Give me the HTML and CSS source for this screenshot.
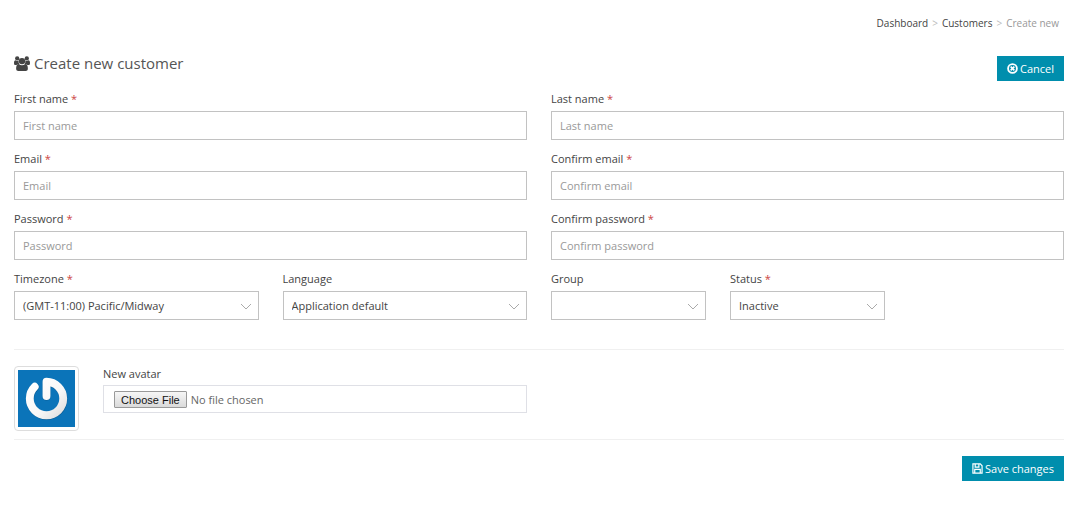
FILE: index.html
```html
<!DOCTYPE html>
<html lang="en">
<head>
<meta charset="utf-8">
<title>Create new customer</title>
<link rel="stylesheet" href="styles.css">
</head>
<body>
<nav class="breadcrumb" aria-label="Breadcrumb">
  <a href="#">Dashboard</a><span class="sep">&gt;</span><a href="#">Customers</a><span class="sep">&gt;</span><span class="current">Create new</span>
</nav>
<form class="page">
  <header class="head">
    <h1 class="title">
      <svg class="title-icon" viewBox="0 0 30 28" aria-hidden="true"><circle cx="6" cy="4.500" r="4"/><circle cx="24" cy="4.500" r="4"/><path d="M0 13c0-3 1-5 3-5 2 1.500 4 1.500 6 .5-1 3 0 5 1 6.500-2 0-4 .5-5 2H3c-2 0-3-1-3-4zM30 13c0-3-1-5-3-5-2 1.500-4 1.500-6 .5 1 3 0 5-1 6.500 2 0 4 .5 5 2h2c2 0 3-1 3-4z"/><circle cx="15" cy="9.500" r="6"/><path d="M4 24c0-5 1-9 5-9 4 3 8 3 12 0 4 0 5 4 5 9 0 3-2 4-4 4H8c-2 0-4-1-4-4z"/></svg>
      Create new customer
    </h1>
    <button type="button" class="btn">
      <svg class="btn-icon" viewBox="0 0 12 12" aria-hidden="true"><circle cx="6" cy="6" r="4.800" fill="none" stroke="currentColor" stroke-width="2"/><path d="M4 4l4 4M8 4l-4 4" fill="none" stroke="currentColor" stroke-width="1.800"/></svg>Cancel
    </button>
  </header>

  <div class="grid">
    <div class="field half"><label for="first">First name <span class="req">*</span></label><input class="control" id="first" type="text" placeholder="First name"></div>
    <div class="field half"><label for="last">Last name <span class="req">*</span></label><input class="control" id="last" type="text" placeholder="Last name"></div>
    <div class="field half"><label for="email">Email <span class="req">*</span></label><input class="control" id="email" type="email" placeholder="Email"></div>
    <div class="field half"><label for="email2">Confirm email <span class="req">*</span></label><input class="control" id="email2" type="email" placeholder="Confirm email"></div>
    <div class="field half"><label for="pass">Password <span class="req">*</span></label><input class="control" id="pass" type="password" placeholder="Password"></div>
    <div class="field half"><label for="pass2">Confirm password <span class="req">*</span></label><input class="control" id="pass2" type="password" placeholder="Confirm password"></div>
    <div class="field quarter"><label for="tz">Timezone <span class="req">*</span></label>
      <div class="select"><select class="control" id="tz"><option>(GMT-11:00) Pacific/Midway</option></select><svg class="chevron" viewBox="0 0 12 8" aria-hidden="true"><path d="M1 1l5 5 5-5"/></svg></div></div>
    <div class="field quarter"><label for="lang">Language</label>
      <div class="select"><select class="control" id="lang"><option>Application default</option></select><svg class="chevron" viewBox="0 0 12 8" aria-hidden="true"><path d="M1 1l5 5 5-5"/></svg></div></div>
    <div class="field sixth"><label for="group">Group</label>
      <div class="select"><select class="control" id="group"><option></option></select><svg class="chevron" viewBox="0 0 12 8" aria-hidden="true"><path d="M1 1l5 5 5-5"/></svg></div></div>
    <div class="field sixth"><label for="status">Status <span class="req">*</span></label>
      <div class="select"><select class="control" id="status"><option>Inactive</option></select><svg class="chevron" viewBox="0 0 12 8" aria-hidden="true"><path d="M1 1l5 5 5-5"/></svg></div></div>
  </div>

  <section class="avatar-row">
    <div class="avatar">
      <svg viewBox="0 0 58 58" role="img" aria-label="Current avatar">
        <defs>
          <linearGradient id="face" x1="0" y1="0" x2="1" y2="1"><stop offset="0" stop-color="#fff"/><stop offset=".6" stop-color="#f8f8f8"/><stop offset="1" stop-color="#dedede"/></linearGradient>
        </defs>
        <rect width="58" height="58" fill="#0b74b9"/>
        <path class="mark shade" d="M17.500 17.500A17 17 0 1 0 41 17.500Q36 12.500 29 12.500V27"/>
        <path class="mark" stroke="url(#face)" d="M17 17A17 17 0 1 0 41 17Q36 12 29 12V26.500"/>
      </svg>
    </div>
    <div class="field upload"><label for="avatar">New avatar</label><input class="file" id="avatar" type="file"></div>
  </section>

  <footer class="actions">
    <button type="submit" class="btn">
      <svg class="btn-icon" viewBox="0 0 12 12" aria-hidden="true"><path d="M1 1h8l2 2v8H1zM3.500 1v3.500h4V1M3 11V7h6v4" fill="none" stroke="currentColor" stroke-width="1.300"/></svg>Save changes
    </button>
  </footer>
</form>
</body>
</html>
```
FILE: styles.css
```css
* { box-sizing: border-box; }
body {
  margin: 0;
  padding: 15px 16px 0 14px;
  background: #fff;
  color: #444;
  font: 11px/16px "Open Sans", "Noto Sans", sans-serif;
}
.breadcrumb {
  display: flex;
  justify-content: flex-end;
  gap: 4px;
  padding-right: 5px;
  font-size: 10px;
}
.breadcrumb a { color: #444; text-decoration: none; }
.sep { color: #bbb; }
.current { color: #999; }
.head {
  display: flex;
  justify-content: space-between;
  align-items: flex-start;
  margin-top: 21px;
}
.title {
  display: flex;
  align-items: center;
  gap: 4px;
  margin: 0;
  font-size: 15px;
  font-weight: 400;
  line-height: 22px;
  color: #555;
}
.title-icon { width: 16px; height: 15px; fill: #444; }
.btn {
  display: flex;
  align-items: center;
  gap: 2px;
  height: 25px;
  padding: 0 10px;
  border: 0;
  background: #008ead;
  color: #fff;
  font: inherit;
}
.head .btn { margin-top: 4px; }
.btn-icon { width: 11px; height: 11px; }
.grid {
  display: grid;
  grid-template-columns: repeat(12, minmax(0, 1fr));
  gap: 11px 24px;
  margin-top: 10px;
}
.half { grid-column: span 6; }
.quarter { grid-column: span 3; }
.sixth { grid-column: span 2; }
.field { display: flex; flex-direction: column; gap: 4px; }
.req { color: #c44; }
.control {
  width: 100%;
  height: 29px;
  padding: 0 8px;
  border: 1px solid #c2c2c2;
  border-radius: 0;
  background: #fff;
  color: #444;
  font: inherit;
  appearance: none;
}
.control::placeholder { color: #999; opacity: 1; }
.select { position: relative; }
.chevron {
  position: absolute;
  right: 7px;
  top: 12px;
  width: 12px;
  height: 8px;
  fill: none;
  stroke: #aaa;
  pointer-events: none;
}
.avatar-row {
  display: flex;
  align-items: flex-start;
  gap: 24px;
  margin-top: 29px;
  padding: 16px 0 8px;
  border: solid #f0f0f0;
  border-width: 1px 0;
}
.avatar {
  width: 65px;
  padding: 3px;
  border: 1px solid #ddd;
  border-radius: 4px;
}
.avatar svg { display: block; width: 100%; }
.mark {
  fill: none;
  stroke-width: 8;
  stroke-linecap: round;
  stroke-linejoin: round;
}
.shade { stroke: #0a5c94; }
.upload { width: calc(50% - 101px); gap: 3px; }
.file {
  width: 100%;
  height: 28px;
  padding: 5px 10px;
  border: 1px solid #dfe0e6;
  color: #666;
  font: inherit;
}
.file::file-selector-button {
  height: 17px;
  margin: 0 4px 0 0;
  padding: 0 6px;
  border: 1px solid #999;
  border-radius: 1px;
  background: linear-gradient(#f6f6f6, #dadada);
  color: #111;
  font: 11px "Liberation Sans", Arial, sans-serif;
}
.actions {
  display: flex;
  justify-content: flex-end;
  margin-top: 16px;
}
```
